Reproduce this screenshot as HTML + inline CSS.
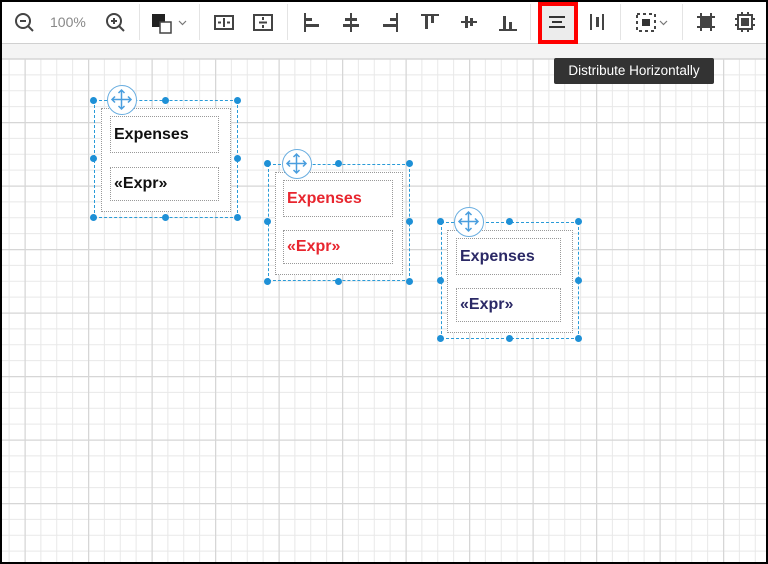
<!DOCTYPE html>
<html><head><meta charset="utf-8"><style>
*{margin:0;padding:0;box-sizing:border-box}
html,body{width:768px;height:564px;overflow:hidden;background:#fff;font-family:"Liberation Sans",sans-serif}
#frame{position:absolute;left:0;top:0;width:768px;height:564px;border:2px solid #000;z-index:50;pointer-events:none}
#tb{position:absolute;left:0;top:0;width:768px;height:44px;background:#fff;border-bottom:1px solid #d0d0d0}
#strip{position:absolute;left:0;top:44px;width:768px;height:15px;background:#f4f4f4;border-bottom:1px solid #ddd}
#grid{position:absolute;left:0;top:59px;width:768px;height:505px}
.sep{position:absolute;top:4px;width:1px;height:36px;background:#e4e4e4}
.ic{position:absolute;top:11px}
.sel{position:absolute;border:1px dashed #2a9bd8}
.h{position:absolute;width:7px;height:7px;border-radius:50%;background:#1e90d6}
.in{position:absolute;border:1px dotted #999}
.tx{position:absolute;border:1px dotted #999;font-weight:bold;font-size:16px;padding-left:3px;display:flex;align-items:center;font-family:"Liberation Sans","DejaVu Sans",sans-serif}
.mv{position:absolute;width:30px;height:30px;border-radius:50%;border:1.5px solid #6aaee0;background:#fff}
#tip{position:absolute;left:554px;top:58px;width:160px;height:26px;background:#333;color:#fff;font-size:13.5px;line-height:26px;text-align:center;border-radius:2px}
</style></head><body>
<div id="tb">
 <svg class="ic" style="left:13px" width="22" height="22" viewBox="0 0 22 22" fill="none" stroke="#444" stroke-width="2"><circle cx="10" cy="10" r="7"/><path d="M15 15l5 5M7 10h6"/></svg>
 <div style="position:absolute;left:50px;top:14px;font-size:14px;color:#888">100%</div>
 <svg class="ic" style="left:104px" width="22" height="22" viewBox="0 0 22 22" fill="none" stroke="#444" stroke-width="2"><circle cx="10" cy="10" r="7"/><path d="M15 15l5 5M7 10h6M10 7v6"/></svg>
 <div class="sep" style="left:139px"></div>
 <svg class="ic" style="left:151px" width="40" height="24" viewBox="0 0 40 24"><rect x="1" y="3" width="13" height="13" fill="#222"/><rect x="9" y="11" width="11" height="11" fill="#fff" stroke="#444" stroke-width="1.5"/><path d="M28 10l3.5 3.5L35 10" fill="none" stroke="#777" stroke-width="1.2"/></svg>
 <div class="sep" style="left:199px"></div>
 <svg class="ic" style="left:213px" width="22" height="22" viewBox="0 0 22 22" fill="none" stroke="#444" stroke-width="2"><rect x="2" y="5" width="18" height="13"/><path d="M11 7v9M5 11.5h3M14 11.5h3"/></svg>
 <svg class="ic" style="left:252px" width="22" height="22" viewBox="0 0 22 22" fill="none" stroke="#444" stroke-width="2"><rect x="2" y="4" width="18" height="15"/><path d="M7 11.5h8M11 6v3M11 14v3"/></svg>
 <div class="sep" style="left:287px"></div>
 <svg class="ic" style="left:301px" width="22" height="22" viewBox="0 0 22 22" fill="#444"><rect x="3" y="2" width="2" height="19"/><rect x="5" y="7" width="6" height="3"/><rect x="5" y="13" width="13" height="3"/></svg>
 <svg class="ic" style="left:340px" width="22" height="22" viewBox="0 0 22 22" fill="#444"><rect x="10" y="2" width="2" height="19"/><rect x="5" y="7" width="12" height="3"/><rect x="3" y="13" width="16" height="3"/></svg>
 <svg class="ic" style="left:379px" width="22" height="22" viewBox="0 0 22 22" fill="#444"><rect x="17" y="2" width="2" height="19"/><rect x="11" y="7" width="6" height="3"/><rect x="4" y="13" width="13" height="3"/></svg>
 <svg class="ic" style="left:419px" width="22" height="22" viewBox="0 0 22 22" fill="#444"><rect x="2" y="3" width="18" height="2"/><rect x="6" y="5" width="3" height="13"/><rect x="12" y="5" width="3" height="7"/></svg>
 <svg class="ic" style="left:458px" width="22" height="22" viewBox="0 0 22 22" fill="#444"><rect x="3" y="10" width="16" height="2"/><rect x="7" y="5" width="3" height="12"/><rect x="12" y="7" width="3" height="8"/></svg>
 <svg class="ic" style="left:497px" width="22" height="22" viewBox="0 0 22 22" fill="#444"><rect x="2" y="18" width="18" height="2"/><rect x="6" y="5" width="3" height="13"/><rect x="12" y="11" width="3" height="7"/></svg>
 <div class="sep" style="left:530px"></div>
 <div style="position:absolute;left:538px;top:2px;width:40px;height:42px;border:4px solid #f00;background:#ececec"></div>
 <svg class="ic" style="left:546px" width="22" height="22" viewBox="0 0 22 22" fill="#333"><rect x="3" y="5" width="16" height="2"/><rect x="6" y="10" width="10" height="2"/><rect x="3" y="15" width="16" height="2"/></svg>
 <svg class="ic" style="left:586px" width="22" height="22" viewBox="0 0 22 22" fill="#444"><rect x="4" y="3" width="2" height="16"/><rect x="10" y="6" width="3" height="10"/><rect x="16" y="3" width="2" height="16"/></svg>
 <div class="sep" style="left:620px"></div>
 <svg class="ic" style="left:635px" width="40" height="24" viewBox="0 0 40 24"><rect x="2" y="3" width="18" height="17" fill="none" stroke="#444" stroke-width="2" stroke-dasharray="3 3"/><rect x="7" y="8" width="8" height="7" fill="#333"/><path d="M25 10l3.5 3.5L32 10" fill="none" stroke="#777" stroke-width="1.2"/></svg>
 <div class="sep" style="left:682px"></div>
 <svg class="ic" style="left:695px" width="22" height="22" viewBox="0 0 22 22" fill="#444"><rect x="6" y="6" width="10" height="10" fill="#444"/><rect x="2" y="5" width="18" height="2"/><rect x="2" y="15" width="18" height="2"/><rect x="5" y="2" width="2" height="18"/><rect x="15" y="2" width="2" height="18"/></svg>
 <svg class="ic" style="left:734px" width="22" height="22" viewBox="0 0 22 22" fill="#444"><rect x="7" y="7" width="8" height="8"/><rect x="4" y="4" width="14" height="14" fill="none" stroke="#444" stroke-width="2"/><path d="M1 8h3M1 14h3M18 8h3M18 14h3M8 1v3M14 1v3M8 18v3M14 18v3" stroke="#444" stroke-width="2"/></svg>
</div>
<div id="strip"></div>
<svg id="grid" width="768" height="505">
 <defs>
  <pattern id="mi" x="24.5" y="-0.5" width="15.875" height="15.875" patternUnits="userSpaceOnUse"><path d="M0 0V15.875M0 0H15.875" stroke="#e8e8e8" stroke-width="2" fill="none"/></pattern>
  <pattern id="ma" x="24.5" y="-0.5" width="63.5" height="63.5" patternUnits="userSpaceOnUse"><path d="M0 0V63.5M0 0H63.5" stroke="#d6d6d6" stroke-width="2.5" fill="none"/></pattern>
 </defs>
 <rect width="768" height="505" fill="url(#mi)"/>
 <rect width="768" height="505" fill="url(#ma)"/>
</svg>

<!-- shape 1 -->
<div class="sel" style="left:94px;top:100px;width:144px;height:118px"></div>
<div class="in" style="left:101px;top:108px;width:130px;height:104px;background:#fff"></div>
<div class="tx" style="left:110px;top:116px;width:109px;height:37px;color:#111">Expenses</div>
<div class="tx" style="left:110px;top:167px;width:109px;height:34px;color:#111">«Expr»</div>
<div class="h" style="left:90px;top:97px"></div><div class="h" style="left:162px;top:97px"></div><div class="h" style="left:234px;top:97px"></div>
<div class="h" style="left:90px;top:155px"></div><div class="h" style="left:234px;top:155px"></div>
<div class="h" style="left:90px;top:214px"></div><div class="h" style="left:162px;top:214px"></div><div class="h" style="left:234px;top:214px"></div>
<div class="mv" style="left:107px;top:85px"><svg width="27" height="27" viewBox="0 0 27 27" fill="none" stroke="#4a9ede" stroke-width="1.5"><path d="M13.5 4v19M4 13.5h19M10.5 7l3-3 3 3M10.5 20l3 3 3-3M7 10.5l-3 3 3 3M20 10.5l3 3-3 3"/></svg></div>

<!-- shape 2 -->
<div class="sel" style="left:268px;top:164px;width:142px;height:117px"></div>
<div class="in" style="left:275px;top:172px;width:128px;height:103px;background:#fff"></div>
<div class="tx" style="left:283px;top:180px;width:110px;height:37px;color:#e8262f">Expenses</div>
<div class="tx" style="left:283px;top:230px;width:110px;height:34px;color:#e8262f">«Expr»</div>
<div class="h" style="left:264px;top:160px"></div><div class="h" style="left:335px;top:160px"></div><div class="h" style="left:406px;top:160px"></div>
<div class="h" style="left:264px;top:218px"></div><div class="h" style="left:406px;top:218px"></div>
<div class="h" style="left:264px;top:278px"></div><div class="h" style="left:335px;top:278px"></div><div class="h" style="left:406px;top:278px"></div>
<div class="mv" style="left:282px;top:149px"><svg width="27" height="27" viewBox="0 0 27 27" fill="none" stroke="#4a9ede" stroke-width="1.5"><path d="M13.5 4v19M4 13.5h19M10.5 7l3-3 3 3M10.5 20l3 3 3-3M7 10.5l-3 3 3 3M20 10.5l3 3-3 3"/></svg></div>

<!-- shape 3 -->
<div class="sel" style="left:441px;top:222px;width:138px;height:117px"></div>
<div class="in" style="left:447px;top:230px;width:126px;height:103px;background:#fff"></div>
<div class="tx" style="left:456px;top:238px;width:105px;height:37px;color:#2b2966">Expenses</div>
<div class="tx" style="left:456px;top:288px;width:105px;height:34px;color:#2b2966">«Expr»</div>
<div class="h" style="left:437px;top:218px"></div><div class="h" style="left:506px;top:218px"></div><div class="h" style="left:575px;top:218px"></div>
<div class="h" style="left:437px;top:277px"></div><div class="h" style="left:575px;top:277px"></div>
<div class="h" style="left:437px;top:335px"></div><div class="h" style="left:506px;top:335px"></div><div class="h" style="left:575px;top:335px"></div>
<div class="mv" style="left:454px;top:207px"><svg width="27" height="27" viewBox="0 0 27 27" fill="none" stroke="#4a9ede" stroke-width="1.5"><path d="M13.5 4v19M4 13.5h19M10.5 7l3-3 3 3M10.5 20l3 3 3-3M7 10.5l-3 3 3 3M20 10.5l3 3-3 3"/></svg></div>

<div id="tip">Distribute Horizontally</div>
<div id="frame"></div>
</body></html>
